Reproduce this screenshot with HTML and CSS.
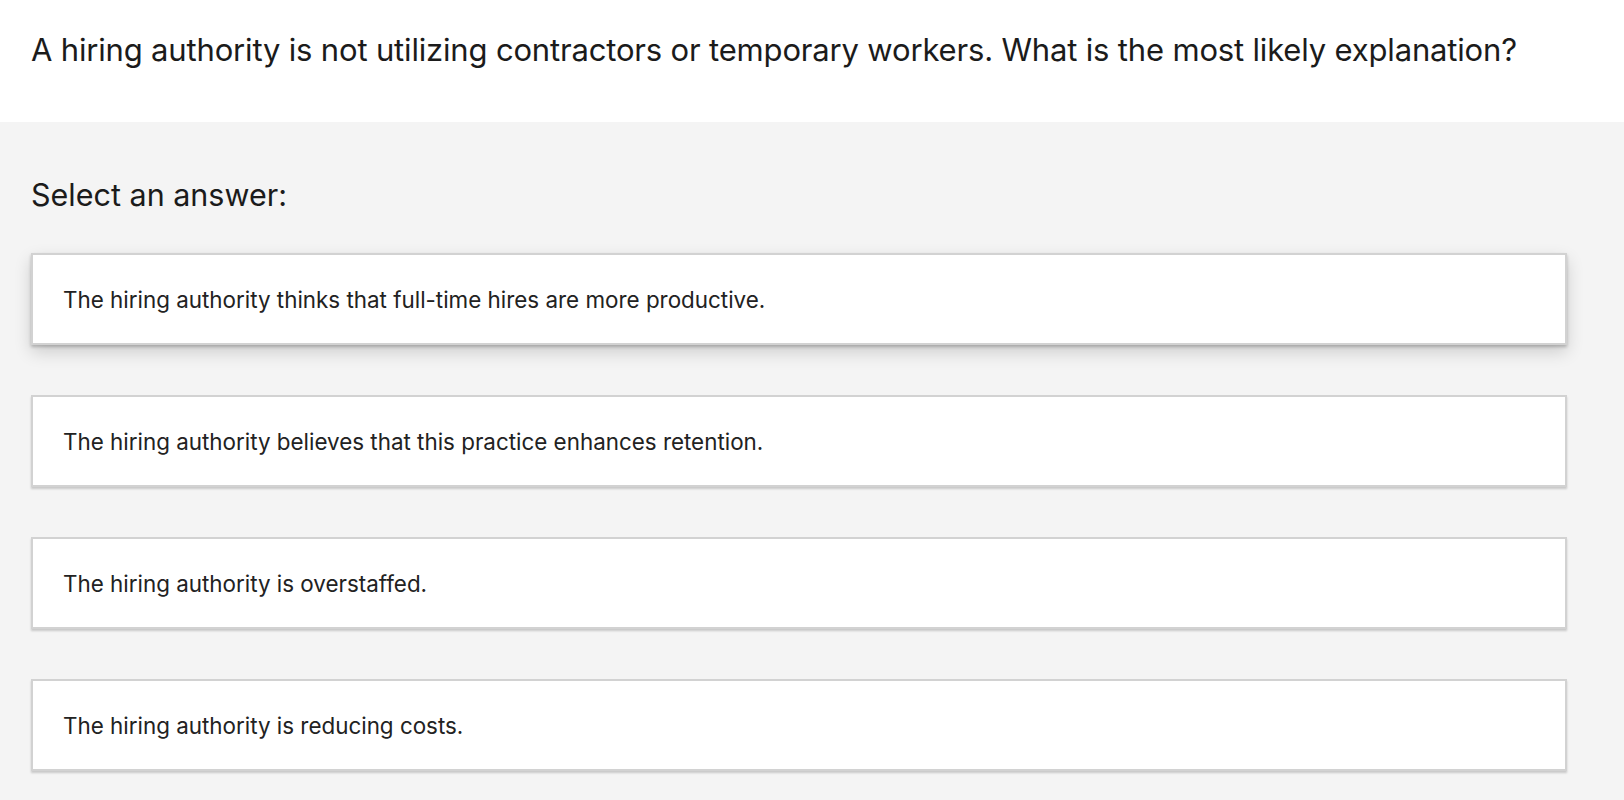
FILE: index.html
```html
<!DOCTYPE html>
<html>

<head>
    <title>Question</title>
    <link rel="stylesheet" href="styles.css">
</head>

<body>
    <div class="question-header">
        <h1 class="question-text">A hiring authority is not utilizing contractors or temporary workers. What is the most likely explanation?</h1>
    </div>
    <div class="answer-area">
        <h2 class="answer-title">Select an answer:</h2>
        <div class="answer-list">
            <div class="answer-option active">The hiring authority thinks that full-time hires are more productive.</div>
            <div class="answer-option">The hiring authority believes that this practice enhances retention.</div>
            <div class="answer-option">The hiring authority is overstaffed.</div>
            <div class="answer-option">The hiring authority is reducing costs.</div>
        </div>
    </div>
</body>

</html>
```

FILE: styles.css
```css
body {
    font-family: Inter, "Noto Sans", sans-serif;
    background-color: #f4f4f4;
    color: #1b1b1b;
    margin: 0;
    padding: 0;
}

.question-header {
    background: white;
    height: 122px;
    padding: 30px 40px 0 31px;
    box-sizing: border-box;
}

.question-text {
    margin: 0;
    font-size: 31px;
    line-height: 40px;
    font-weight: 400;
    letter-spacing: -0.17px;
    white-space: nowrap;
}

.answer-area {
    padding: 55px 57px 40px 31px;
}

.answer-title {
    margin: 0 0 40px;
    font-size: 30.5px;
    line-height: 36px;
    font-weight: 400;
}

.answer-list {
    display: flex;
    flex-direction: column;
    gap: 50px;
}

.answer-option {
    background: white;
    border: 2px solid #d2d2d2;
    padding: 31px 30px 29px;
    font-size: 22.4px;
    line-height: 28px;
    color: #222;
    box-shadow: 0 2px 2px rgba(0, 0, 0, 0.18);
    cursor: pointer;
}

.answer-option.active {
    box-shadow: 0 2px 3px rgba(0, 0, 0, 0.22), 0 7px 16px rgba(0, 0, 0, 0.16);
}
```
